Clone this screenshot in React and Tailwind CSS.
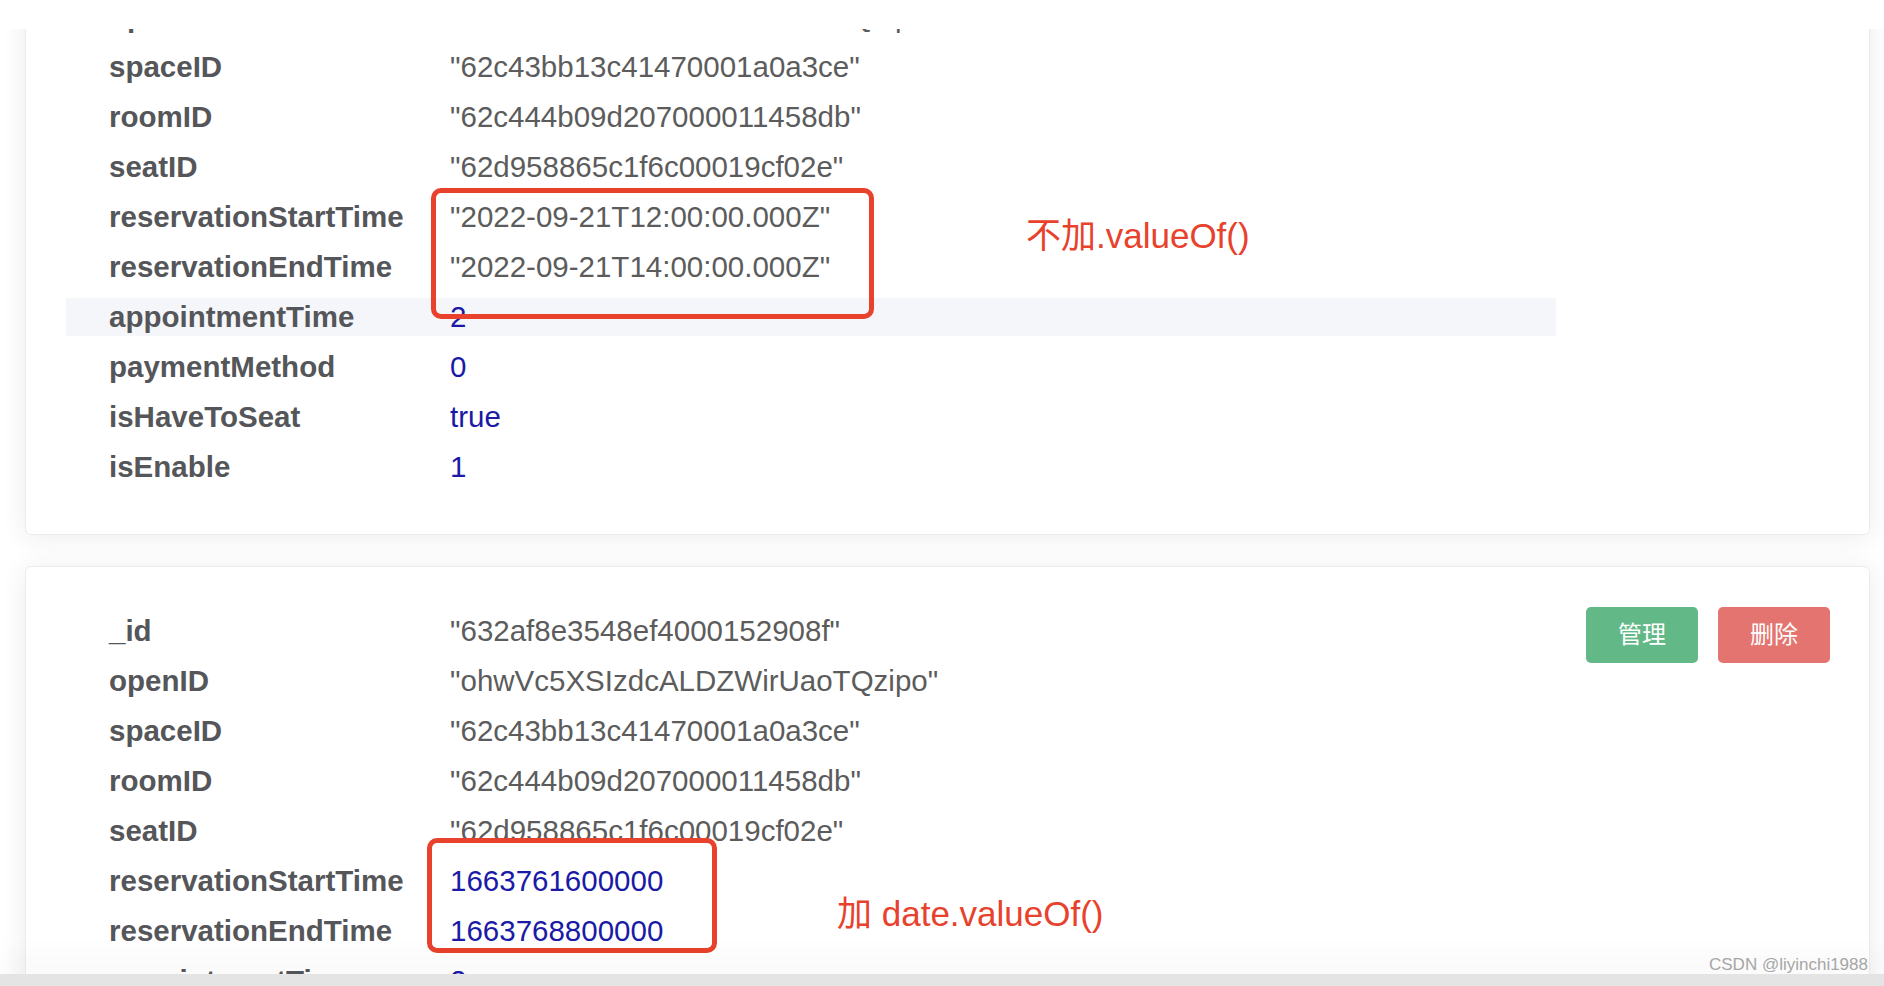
import React from "react";

const FONT = { fontFamily: '"Liberation Sans", "Noto Sans CJK SC", Arial, sans-serif' };

const card1 = [
  ["_id", '"632af8e3548ef4000152908f"', "s"],
  ["openID", '"ohwVc5XSIzdcALDZWirUaoTQzipo"', "s"],
  ["spaceID", '"62c43bb13c41470001a0a3ce"', "s"],
  ["roomID", '"62c444b09d207000011458db"', "s"],
  ["seatID", '"62d958865c1f6c00019cf02e"', "s"],
  ["reservationStartTime", '"2022-09-21T12:00:00.000Z"', "s"],
  ["reservationEndTime", '"2022-09-21T14:00:00.000Z"', "s"],
  ["appointmentTime", "2", "n", true],
  ["paymentMethod", "0", "n"],
  ["isHaveToSeat", "true", "n"],
  ["isEnable", "1", "n"],
];

const card2 = [
  ["_id", '"632af8e3548ef4000152908f"', "s"],
  ["openID", '"ohwVc5XSIzdcALDZWirUaoTQzipo"', "s"],
  ["spaceID", '"62c43bb13c41470001a0a3ce"', "s"],
  ["roomID", '"62c444b09d207000011458db"', "s"],
  ["seatID", '"62d958865c1f6c00019cf02e"', "s"],
  ["reservationStartTime", "1663761600000", "n"],
  ["reservationEndTime", "1663768800000", "n"],
  ["appointmentTime", "2", "n"],
  ["paymentMethod", "0", "n"],
];

function Row({ label, value, kind, hl }) {
  return (
    <div className={`flex items-center h-[38px] ${hl ? "bg-[#f5f6fa]" : ""}`}>
      <div className="w-[384px] shrink-0 pl-[43px] font-bold text-[29.5px] text-[#55565a] whitespace-nowrap">
        {label}
      </div>
      <div
        className={`text-[29.5px] whitespace-nowrap ${
          kind === "n" ? "text-[#1a1aa6]" : "text-[#5c5c5c]"
        }`}
      >
        {value}
      </div>
    </div>
  );
}

function Rows({ data }) {
  return (
    <div className="flex flex-col gap-[12px] w-[1490px] shrink-0">
      {data.map(([l, v, k, hl]) => (
        <Row key={l} label={l} value={v} kind={k} hl={hl} />
      ))}
    </div>
  );
}

function Buttons() {
  return (
    <div className="ml-auto -mt-[5px] flex gap-[20px]">
      <button className="w-[112px] h-[56px] rounded-[5px] bg-[#63b887] text-white text-[24px]">
        管理
      </button>
      <button className="w-[112px] h-[56px] rounded-[5px] bg-[#e37470] text-white text-[24px]">
        删除
      </button>
    </div>
  );
}

export default function App() {
  return (
    <div className="relative w-[1884px] h-[986px] overflow-hidden bg-white" style={FONT}>
      <div className="pl-[25px] pr-[14px] flex flex-col">
        <div className="mt-[-95px] rounded-[6px] border border-[#ebebf0] bg-white shadow-[0_2px_26px_rgba(40,40,60,0.09)] flex items-start pl-[40px] pr-[39px] pt-[42px] pb-[48px]">
          <Rows data={card1} />
          <Buttons />
        </div>
        <div className="mt-[31px] rounded-[6px] border border-[#ebebf0] bg-white shadow-[0_2px_26px_rgba(40,40,60,0.09)] flex items-start pl-[40px] pr-[39px] pt-[45px] pb-[48px]">
          <Rows data={card2} />
          <Buttons />
        </div>
      </div>

      {/* top white strip */}
      <div className="absolute top-0 left-0 w-full h-[29px] bg-white" />

      {/* annotations */}
      <div className="absolute left-[431px] top-[188px] w-[443px] h-[131px] border-[5px] border-[#e8412c] rounded-[10px]" />
      <div className="absolute left-[1026px] top-[215px] leading-[42px] text-[35px] text-[#e8412c] whitespace-nowrap">
        不加.valueOf()
      </div>
      <div className="absolute left-[427px] top-[838px] w-[290px] h-[115px] border-[5px] border-[#e8412c] rounded-[10px]" />
      <div className="absolute left-[837px] top-[893px] leading-[42px] text-[35px] text-[#e8412c] whitespace-nowrap">
        加 date.valueOf()
      </div>

      {/* bottom bar */}
      <div className="absolute bottom-0 left-0 w-full h-[12px] bg-[#e4e4e4] shadow-[0_-14px_28px_rgba(0,0,0,0.06)]" />
      <div className="absolute right-[16px] bottom-[11px] text-[17px] leading-[20px] text-[#a6a6a6] whitespace-nowrap">
        CSDN @liyinchi1988
      </div>
    </div>
  );
}
